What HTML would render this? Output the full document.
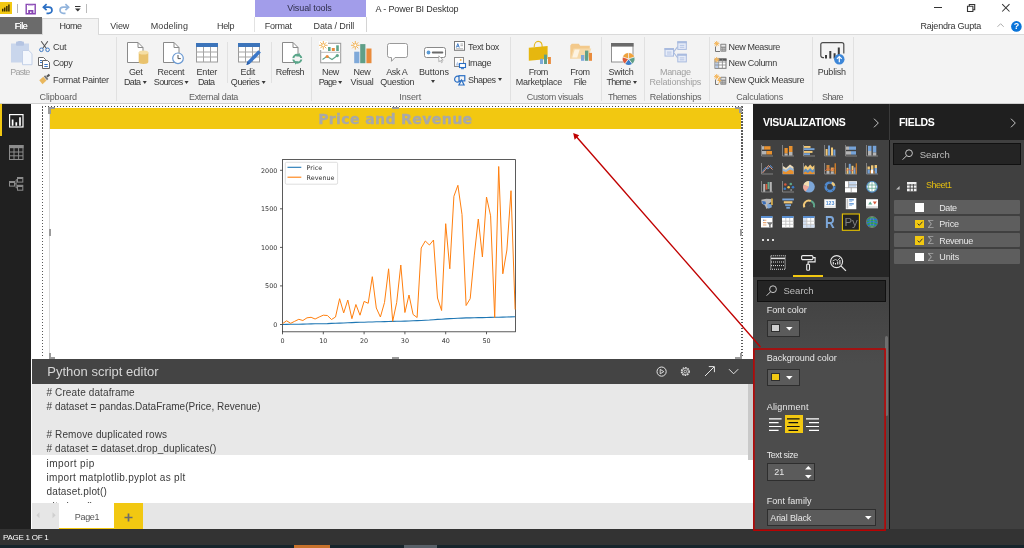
<!DOCTYPE html>
<html><head><meta charset="utf-8"><title>A - Power BI Desktop</title>
<style>
*{box-sizing:border-box;margin:0;padding:0}
html,body{width:1024px;height:548px;overflow:hidden;background:#fff}
body{font-family:"Liberation Sans",sans-serif;font-size:9px;color:#3a3a3a;position:relative;letter-spacing:-.15px}
#app{position:absolute;left:0;top:0;width:1024px;height:548px;will-change:transform}
.a{position:absolute}
.t{position:absolute;white-space:nowrap;height:12px;line-height:12px}
.c{text-align:center;transform:translateX(-50%)}
svg{position:absolute;overflow:visible}
.g{color:#5e5e5e}
.d{color:#a0a0a0}
.w{color:#e8e8e8}
.code{font-size:10px;color:#3a3a3a;left:46.5px;letter-spacing:-.1px}
.ph{font-size:10.5px;color:#fff;font-weight:bold;letter-spacing:-.3px}
.sep{position:absolute;width:1px;background:#e1e1e1}
.dd{position:absolute;background:#5b5b5b;border:1px solid #2e2e2e}
.row{position:absolute;left:894px;width:126px;height:14.3px;background:#5e5e5e;border-radius:1px}
</style></head><body>
<div id="app">
<!-- TITLE BAR -->
<div class="a" style="left:0px;top:2.3px;width:12px;height:11.7px;background:#f2c811;"></div>
<svg style="left:0px;top:2px" width="12" height="12" viewBox="0 0 12 12"><path d="M2.75 9.6v-2.8M4.75 9.600v-4M6.850 9.600v-5.500M8.900 9.600v-7.100" stroke="#2a2100" stroke-width="1.350" fill="none"/></svg>
<div class="a" style="left:17px;top:4px;width:1px;height:9px;background:#b5b5b5;"></div>
<svg style="left:25px;top:3px" width="12" height="12" viewBox="0 0 12 12"><path d="M1.200 1.400h9v9.400h-9z" fill="#fff" stroke="#8846b3" stroke-width="1.400"/><rect x="3.200" y="7" width="5.200" height="3.800" fill="#8846b3"/><rect x="5" y="8.600" width="1.500" height="1.300" fill="#fff"/><path d="M3 2.300h5.500" stroke="#c9a8e0" stroke-width="1"/></svg>
<svg style="left:42px;top:3px" width="12" height="11" viewBox="0 0 12 11"><path d="M1.5 4.2h5.2a3.3 3.1 0 0 1 0 6.2h-2.2" fill="none" stroke="#2b6fc4" stroke-width="1.700"/><path d="M4.6 1.2l-3.2 3l3.2 3" fill="none" stroke="#2b6fc4" stroke-width="1.700"/></svg>
<svg style="left:58px;top:3px" width="12" height="11" viewBox="0 0 12 11"><path d="M10.5 4.2h-5.2a3.3 3.1 0 0 0 0 6.2h2.2" fill="none" stroke="#92b4dc" stroke-width="1.700"/><path d="M7.4 1.2l3.2 3l-3.2 3" fill="none" stroke="#92b4dc" stroke-width="1.700"/></svg>
<svg style="left:75px;top:6px" width="6" height="7" viewBox="0 0 6 7"><path d="M0 0.5h5.5" stroke="#333" stroke-width="1"/><path d="M0 2.5h5.6l-2.8 3z" fill="#333"/></svg>
<div class="a" style="left:86px;top:4px;width:1px;height:9px;background:#bbb;"></div>
<div class="a" style="left:254.5px;top:0px;width:111.5px;height:17px;background:#a29dea;"></div>
<div class="t c" style="top:2.00px;left:309.5px;letter-spacing:-0.113px;color:#2e2e4a">Visual tools</div>
<div class="t" style="top:2.70px;left:375.5px;letter-spacing:-0.127px;color:#333">A - Power BI Desktop</div>
<div class="a" style="left:934px;top:7.4px;width:7.6px;height:1px;background:#333;"></div>
<svg style="left:967.3px;top:3.5px" width="9" height="9" viewBox="0 0 9 9"><path d="M0.500 2.300h5.400v5.200h-5.400z M2.300 2.100v-1.600h5.400v5.200h-1.600" fill="none" stroke="#333" stroke-width="1.100"/></svg>
<svg style="left:1002.2px;top:4px" width="8" height="8" viewBox="0 0 8 8"><path d="M0.200 0.200l7.300 7.300M7.500 0.200l-7.300 7.300" stroke="#333" stroke-width="1.050"/></svg>
<!-- TABS -->
<div class="a" style="left:0px;top:17.3px;width:42px;height:16.7px;background:#6b6b6b;"></div>
<div class="a" style="left:42px;top:17.5px;width:56.5px;height:17.5px;background:#f3f3f3;border:1px solid #d8d8d8;border-bottom:none"></div>
<div class="t c" style="top:20.00px;left:20.9px;letter-spacing:-0.500px;color:#fff;text-shadow:0 0 .4px #fff">File</div>
<div class="t c" style="top:20.00px;left:70.5px;letter-spacing:-0.564px;color:#333">Home</div>
<div class="t c" style="top:20.00px;left:119.75px;letter-spacing:-0.086px;">View</div>
<div class="t c" style="top:20.00px;left:169.4px;letter-spacing:0.091px;">Modeling</div>
<div class="t c" style="top:20.00px;left:225.6px;letter-spacing:-0.315px;">Help</div>
<div class="t c" style="top:20.00px;left:278.25px;letter-spacing:-0.250px;">Format</div>
<div class="t c" style="top:20.00px;left:333.9px;letter-spacing:-0.105px;">Data / Drill</div>
<div class="a" style="left:365.5px;top:17px;width:1px;height:15px;background:#d4d4d4;"></div>
<div class="a" style="left:254.3px;top:17px;width:1px;height:15px;background:#e2e2e2;"></div>
<div class="t c" style="top:20.00px;left:950.75px;letter-spacing:-0.217px;color:#333">Rajendra Gupta</div>
<svg style="left:996.5px;top:23.3px" width="8" height="5" viewBox="0 0 8 5"><path d="M0.500 3.800l3.100-3.100l3.100 3.100" fill="none" stroke="#ababab" stroke-width="1"/></svg>
<svg style="left:1011px;top:20.5px" width="11" height="11" viewBox="0 0 11 11"><circle cx="5.4" cy="5.4" r="5.3" fill="#0a74d9"/></svg>
<div class="t c" style="top:20.00px;left:1016.4px;color:#fff;font-weight:bold;font-size:9px">?</div>
<!-- RIBBON -->
<div class="a" style="left:0px;top:34px;width:1024px;height:70px;background:#f3f3f3;border-top:1px solid #dadada;border-bottom:1px solid #cfcfcf"></div>
<div class="a" style="left:43px;top:34px;width:54.5px;height:1px;background:#f3f3f3;"></div>
<div class="sep" style="left:116px;top:37px;height:64px"></div>
<div class="sep" style="left:311px;top:37px;height:64px"></div>
<div class="sep" style="left:510px;top:37px;height:64px"></div>
<div class="sep" style="left:601px;top:37px;height:64px"></div>
<div class="sep" style="left:643.5px;top:37px;height:64px"></div>
<div class="sep" style="left:708.5px;top:37px;height:64px"></div>
<div class="sep" style="left:812px;top:37px;height:64px"></div>
<div class="sep" style="left:853px;top:37px;height:64px"></div>
<div class="sep" style="left:226.5px;top:42px;height:41px"></div>
<div class="sep" style="left:271.2px;top:42px;height:41px"></div>
<svg style="left:11px;top:41px" width="22" height="24" viewBox="0 0 22 24"><rect x="0" y="2.5" width="18" height="19" fill="#c9d6ec"/><rect x="5" y="0.5" width="8" height="4.2" rx="1" fill="#b4c4e2"/><rect x="7.3" y="0" width="3.4" height="2" fill="#b4c4e2"/><path d="M11.5 9.5h6.3l3.2 3.2v11h-9.5z" fill="#f4f7fc" stroke="#c3d0e8" stroke-width="1"/></svg>
<div class="t c d" style="top:66.00px;left:19.9px;letter-spacing:-0.723px;">Paste</div>
<svg style="left:39px;top:41px" width="11" height="11" viewBox="0 0 11 11"><path d="M2.2 0.3l5.2 7.2M8.8 0.3l-5.2 7.2" stroke="#555" stroke-width="1.1" fill="none"/><circle cx="2.4" cy="8.8" r="1.8" fill="none" stroke="#3b78c4" stroke-width="1"/><circle cx="8.6" cy="8.8" r="1.8" fill="none" stroke="#3b78c4" stroke-width="1"/></svg>
<div class="t" style="top:40.50px;left:53px;letter-spacing:-0.268px;">Cut</div>
<svg style="left:38px;top:57px" width="12" height="12" viewBox="0 0 12 12"><path d="M0.5 0.5h5l2 2v6h-7z" fill="#fff" stroke="#666" stroke-width="1"/><path d="M4.5 3.5h5l2 2v6h-7z" fill="#fff" stroke="#666" stroke-width="1"/><path d="M2 3.5h2M2 5.5h2M6.3 7.5h3.5M6.3 9.5h3.5" stroke="#3b78c4" stroke-width="1"/></svg>
<div class="t" style="top:57.00px;left:53px;letter-spacing:-0.452px;">Copy</div>
<svg style="left:39px;top:74px" width="12" height="11" viewBox="0 0 12 11"><path d="M0.3 6.2l4-3.4l3.2 3.8l-4 3.6z" fill="#e9b75e"/><path d="M4.8 2.4l1.3-1.1l3.2 3.8l-1.3 1.1z" fill="#777"/><path d="M7.2 1.9l2.6-2.1l1.3 1.6l-2.6 2.1z" fill="#555"/></svg>
<div class="t" style="top:73.60px;left:53px;letter-spacing:-0.265px;">Format Painter</div>
<div class="t c g" style="top:90.60px;left:58.3px;letter-spacing:-0.124px;">Clipboard</div>
<svg style="left:127px;top:42px" width="22" height="23" viewBox="0 0 22 23"><path d="M0.5 0.5h10.5l5 5v15h-15.5z" fill="#fff" stroke="#8a8a8a" stroke-width="1"/><path d="M11 0.5v5h5" fill="none" stroke="#8a8a8a" stroke-width="1"/><path d="M11.7 10.5v9.5a4.8 2 0 0 0 9.6 0v-9.5z" fill="#e9c26d"/><ellipse cx="16.5" cy="10.5" rx="4.8" ry="2" fill="#f5dea4"/></svg>
<div class="t c" style="top:66.20px;left:135.6px;letter-spacing:-0.368px;">Get</div>
<div class="t c" style="top:75.90px;left:135.3px;"><span style="letter-spacing:-0.677px">Data</span><span style="display:inline-block;width:0;height:0;margin-left:2.200px;position:relative;top:-1.300px;border-left:2.800px solid transparent;border-right:2.800px solid transparent;border-top:3.100px solid #3a3a3a"></span></div>
<svg style="left:162.5px;top:42px" width="22" height="23" viewBox="0 0 22 23"><path d="M0.5 0.5h10.5l5 5v15h-15.5z" fill="#fff" stroke="#8a8a8a" stroke-width="1"/><path d="M11 0.5v5h5" fill="none" stroke="#8a8a8a" stroke-width="1"/><circle cx="15" cy="16.3" r="5.3" fill="#fff" stroke="#6b9ad3" stroke-width="1.2"/><path d="M15 13v3.6h2.8" fill="none" stroke="#555" stroke-width="1"/></svg>
<div class="t c" style="top:66.20px;left:170.9px;letter-spacing:-0.319px;">Recent</div>
<div class="t c" style="top:75.90px;left:171.3px;"><span style="letter-spacing:-0.616px">Sources</span><span style="display:inline-block;width:0;height:0;margin-left:2.200px;position:relative;top:-1.300px;border-left:2.800px solid transparent;border-right:2.800px solid transparent;border-top:3.100px solid #3a3a3a"></span></div>
<svg style="left:196px;top:42.5px" width="22" height="20" viewBox="0 0 22 20"><rect x="0.5" y="0.5" width="21" height="18.5" fill="#fff" stroke="#9a9a9a" stroke-width="1"/><rect x="0" y="0" width="22" height="4" fill="#3c74ba"/><path d="M0.5 9h21M0.5 14h21M7.5 4v15M14.5 4v15" stroke="#a5a5a5" stroke-width="1" fill="none"/></svg>
<div class="t c" style="top:66.20px;left:206.8px;letter-spacing:-0.202px;">Enter</div>
<div class="t c" style="top:75.90px;left:206.2px;letter-spacing:-0.677px;">Data</div>
<svg style="left:237.5px;top:42.5px" width="23" height="22" viewBox="0 0 23 22"><rect x="0.5" y="0.5" width="21" height="18.5" fill="#fff" stroke="#9a9a9a" stroke-width="1"/><rect x="0" y="0" width="22" height="4" fill="#3c74ba"/><path d="M0.5 9h21M0.5 14h21M7.5 4v15M14.5 4v15" stroke="#a5a5a5" stroke-width="1" fill="none"/><path d="M20.3 7.2l2.6 2.4l-11 11.2l-3.4 1.2l0.9-3.5z" fill="#3c78c8"/><path d="M8.5 21.9l0.9-3.4l2.5 2.3z" fill="#2b5ea8"/></svg>
<div class="t c" style="top:66.20px;left:247.7px;letter-spacing:-0.227px;">Edit</div>
<div class="t c" style="top:75.90px;left:248.2px;"><span style="letter-spacing:-0.430px">Queries</span><span style="display:inline-block;width:0;height:0;margin-left:2.200px;position:relative;top:-1.300px;border-left:2.800px solid transparent;border-right:2.800px solid transparent;border-top:3.100px solid #3a3a3a"></span></div>
<svg style="left:282px;top:41.5px" width="22" height="23" viewBox="0 0 22 23"><path d="M0.5 0.5h10.5l5 5v15h-15.5z" fill="#fff" stroke="#8a8a8a" stroke-width="1"/><path d="M11 0.5v5h5" fill="none" stroke="#8a8a8a" stroke-width="1"/><circle cx="15.3" cy="16.8" r="4" fill="#f3f3f3" stroke="#5aa68a" stroke-width="2"/><path d="M10 16.8h3.2M17.3 16.8h3.5" stroke="#f3f3f3" stroke-width="1.6"/><path d="M17.6 10.8v3.6h-3.6z" fill="#5aa68a"/><path d="M13 22.8v-3.6h3.6z" fill="#5aa68a"/></svg>
<div class="t c" style="top:66.20px;left:290px;letter-spacing:-0.459px;">Refresh</div>
<div class="t c g" style="top:90.60px;left:213.5px;letter-spacing:-0.302px;">External data</div>
<svg style="left:319px;top:40.5px" width="23" height="23" viewBox="0 0 23 23"><rect x="1.7" y="2.3" width="20" height="19.5" fill="#fff" stroke="#999" stroke-width="1"/><path d="M1.7 11.3h20" stroke="#bbb" stroke-width="1"/><rect x="9" y="6" width="2.6" height="4" fill="#5fa58a"/><rect x="12.8" y="7" width="3" height="3" fill="#e98b3c"/><rect x="17.2" y="4.3" width="2.6" height="5.7" fill="#5fa58a"/><path d="M3.5 18.5l4.5-3.2l5 3.2l5.5-4" fill="none" stroke="#5fa58a" stroke-width="1.1"/><circle cx="8.2" cy="15.5" r="1.6" fill="#e98b3c"/><circle cx="18.3" cy="14.6" r="1.6" fill="#5fa58a"/><rect x="0" y="0" width="9" height="9" fill="#fff"/><g stroke="#f3b55a" stroke-width="1" fill="none"><path d="M4.3 0v8.6M0 4.3h8.6M1.3 1.3l6 6M7.3 1.3l-6 6"/></g><circle cx="4.3" cy="4.3" r="1.6" fill="#fff" stroke="#f3b55a" stroke-width=".9"/></svg>
<div class="t c" style="top:66.20px;left:330.5px;letter-spacing:-0.401px;">New</div>
<div class="t c" style="top:75.90px;left:330.5px;"><span style="letter-spacing:-0.879px">Page</span><span style="display:inline-block;width:0;height:0;margin-left:2.200px;position:relative;top:-1.300px;border-left:2.800px solid transparent;border-right:2.800px solid transparent;border-top:3.100px solid #3a3a3a"></span></div>
<svg style="left:350.8px;top:40.5px" width="21" height="23" viewBox="0 0 21 23"><rect x="3.2" y="10.7" width="5.2" height="11.5" fill="#7fa9d9"/><rect x="9.2" y="3.1" width="5.2" height="19.1" fill="#5f9f88"/><rect x="15.4" y="7.5" width="5.1" height="14.7" fill="#e98b3c"/><g stroke="#f3b55a" stroke-width="1" fill="none"><path d="M4.3 0v8.6M0 4.3h8.6M1.3 1.3l6 6M7.3 1.3l-6 6"/></g><circle cx="4.3" cy="4.3" r="1.6" fill="#fff" stroke="#f3b55a" stroke-width=".9"/></svg>
<div class="t c" style="top:66.20px;left:362px;letter-spacing:-0.401px;">New</div>
<div class="t c" style="top:75.90px;left:362px;letter-spacing:-0.242px;">Visual</div>
<svg style="left:387px;top:43px" width="21" height="19" viewBox="0 0 21 19"><path d="M2.5 0.5h16a2 2 0 0 1 2 2v10a2 2 0 0 1 -2 2h-10.5l-3.5 3.8v-3.8h-2a2 2 0 0 1 -2-2v-10a2 2 0 0 1 2-2z" fill="#fff" stroke="#9a9a9a" stroke-width="1"/></svg>
<div class="t c" style="top:66.20px;left:396.8px;letter-spacing:-0.382px;">Ask A</div>
<div class="t c" style="top:75.90px;left:397.2px;letter-spacing:-0.265px;">Question</div>
<svg style="left:423.5px;top:47px" width="23" height="16" viewBox="0 0 23 16"><rect x="0.5" y="0.5" width="21" height="10" rx="2" fill="#fff" stroke="#8a8a8a" stroke-width="1"/><circle cx="4.5" cy="5.5" r="1.9" fill="#5b9bd5"/><rect x="7.8" y="4.4" width="11.5" height="2.2" rx="1" fill="#6a6a6a"/><path d="M14.8 8.8v6l1.5-1.3l1.2 2.2l0.9-0.5l-1.1-2.1h1.9z" fill="#fff" stroke="#999" stroke-width=".7"/></svg>
<div class="t c" style="top:66.20px;left:433.9px;letter-spacing:-0.074px;">Buttons</div>
<div class="a" style="left:431.100px;top:80px;width:0;height:0;border-left:2.800px solid transparent;border-right:2.800px solid transparent;border-top:3.100px solid #3a3a3a"></div>
<svg style="left:454px;top:41px" width="11" height="10" viewBox="0 0 11 10"><rect x="0.5" y="0.5" width="10" height="8.8" fill="#fff" stroke="#7a7a7a" stroke-width="1"/><path d="M2.3 6.6l1.5-4l1.5 4M2.9 5.3h1.8" fill="none" stroke="#3b78c4" stroke-width=".9"/><path d="M6.5 3h2.5M6.5 4.7h2.5M2 7.8h7" stroke="#999" stroke-width=".8"/></svg>
<div class="t" style="top:40.50px;left:468px;letter-spacing:-0.314px;">Text box</div>
<svg style="left:454px;top:57px" width="12" height="12" viewBox="0 0 12 12"><rect x="0.5" y="0.5" width="9" height="9" fill="#fff" stroke="#8a8a8a" stroke-width="1"/><path d="M1.5 8.5l2-4l2 4z" fill="#b8cbe8"/><circle cx="6.7" cy="3" r="1" fill="#f3b55a"/><rect x="5.5" y="6.5" width="6" height="4" fill="#fff" stroke="#2b6fc4" stroke-width="1.1"/><path d="M7 11.7h3" stroke="#2b6fc4" stroke-width="1"/></svg>
<div class="t" style="top:57.00px;left:468px;letter-spacing:-0.402px;">Image</div>
<svg style="left:454px;top:74.5px" width="12" height="11" viewBox="0 0 12 11"><circle cx="3.6" cy="4.2" r="3" fill="none" stroke="#2b6fc4" stroke-width="1.2"/><rect x="5" y="0.7" width="5.8" height="5.2" fill="#f3f3f3" stroke="#2b6fc4" stroke-width="1.2"/><path d="M7.5 5l-2.6 5h5.2z" fill="#f3f3f3" stroke="#2b6fc4" stroke-width="1.2"/></svg>
<div class="t" style="top:73.60px;left:468px;"><span style="letter-spacing:-0.504px">Shapes</span><span style="display:inline-block;width:0;height:0;margin-left:2.200px;position:relative;top:-1.300px;border-left:2.800px solid transparent;border-right:2.800px solid transparent;border-top:3.100px solid #3a3a3a"></span></div>
<div class="t c g" style="top:90.60px;left:410.2px;letter-spacing:-0.135px;">Insert</div>
<svg style="left:528px;top:40px" width="24" height="25" viewBox="0 0 24 25"><path d="M6.2 7c0-7.5 8-7.5 8 0" fill="none" stroke="#e7b81a" stroke-width="1.1"/><path d="M0.8 7.8l18.8-1.8v13l-18.8 1.8z" fill="#e6b70f"/><rect x="12" y="18.8" width="3" height="5.2" fill="#7fa9d9"/><rect x="16" y="14.6" width="3" height="9.4" fill="#5f9f88"/><rect x="20" y="17" width="2.9" height="7" fill="#e98b3c"/></svg>
<div class="t c" style="top:66.20px;left:538.3px;letter-spacing:-0.449px;">From</div>
<div class="t c" style="top:75.90px;left:538.9px;letter-spacing:-0.247px;">Marketplace</div>
<svg style="left:570px;top:43px" width="23" height="18" viewBox="0 0 23 18"><path d="M0.3 15.8v-13.3l1.5-1.8h7l1.4 2h9.6v3" fill="#f3c98b"/><path d="M0.3 15.8l3.2-10.3h17.8l-3.2 10.3z" fill="#f6d9a8"/><path d="M2.2 14.6l2.5-8h5l-2.5 8z" fill="#fdf3e1"/><rect x="11" y="12" width="3.3" height="5.8" fill="#7fa9d9"/><rect x="15" y="7.6" width="3.3" height="10.2" fill="#5f9f88"/><rect x="19" y="9.9" width="3" height="7.9" fill="#e98b3c"/></svg>
<div class="t c" style="top:66.20px;left:579.9px;letter-spacing:-0.449px;">From</div>
<div class="t c" style="top:75.90px;left:579.9px;letter-spacing:-0.500px;">File</div>
<div class="t c g" style="top:90.60px;left:555px;letter-spacing:-0.337px;">Custom visuals</div>
<svg style="left:610.5px;top:42.5px" width="25" height="23" viewBox="0 0 25 23"><rect x="0.5" y="0.5" width="21.5" height="18.5" fill="#fff" stroke="#8f8f8f" stroke-width="1"/><rect x="0" y="0" width="22.5" height="3.6" fill="#6a6a6a"/><circle cx="17.6" cy="15.9" r="6.3" fill="#f3f3f3"/><path d="M17.6 15.9v-5.9a5.9 5.9 0 0 1 5.6 4.1z" fill="#efa23c"/><path d="M17.6 15.9l5.6-1.8a5.9 5.9 0 0 1 -2.1 6.6z" fill="#5f9f88"/><path d="M17.6 15.9l3.5 4.8a5.9 5.9 0 0 1 -7 0z" fill="#3c7dc8"/><path d="M17.6 15.9l-3.5 4.8a5.9 5.9 0 0 1 -2.1-6.6z" fill="#dd5a3a"/><path d="M17.6 15.9l-5.6-1.8a5.9 5.9 0 0 1 5.6-4.1z" fill="#efa23c"/><path d="M17.6 15.9v-5.9M17.6 15.9l5.6-1.8M17.6 15.9l3.5 4.8M17.6 15.9l-3.5 4.8M17.6 15.9l-5.6-1.8" stroke="#f3f3f3" stroke-width=".8"/></svg>
<div class="t c" style="top:66.20px;left:621px;letter-spacing:-0.268px;">Switch</div>
<div class="t c" style="top:75.90px;left:621.5px;"><span style="letter-spacing:-0.842px">Theme</span><span style="display:inline-block;width:0;height:0;margin-left:2.200px;position:relative;top:-1.300px;border-left:2.800px solid transparent;border-right:2.800px solid transparent;border-top:3.100px solid #3a3a3a"></span></div>
<div class="t c g" style="top:90.60px;left:622px;letter-spacing:-0.735px;">Themes</div>
<svg style="left:664px;top:41px" width="24" height="22" viewBox="0 0 24 22"><path d="M9.5 11.2l4.2-5.5M9.5 11.2l4.2 5.8" stroke="#a9bbdf" stroke-width="1.1"/><rect x="1" y="7.5" width="8.5" height="7.6" fill="#e6ecf8" stroke="#a9bbdf" stroke-width="1"/><rect x="0.5" y="7.0" width="9.5" height="2" fill="#a9bbdf"/><path d="M3 11.1h4.5M3 13.0h4.5" stroke="#a9bbdf" stroke-width=".8"/><rect x="13.8" y="0.8" width="8.5" height="7.6" fill="#e6ecf8" stroke="#a9bbdf" stroke-width="1"/><rect x="13.3" y="0.30000000000000004" width="9.5" height="2" fill="#a9bbdf"/><path d="M15.8 4.4h4.5M15.8 6.3h4.5" stroke="#a9bbdf" stroke-width=".8"/><rect x="13.8" y="13.3" width="8.5" height="7.6" fill="#e6ecf8" stroke="#a9bbdf" stroke-width="1"/><rect x="13.3" y="12.8" width="9.5" height="2" fill="#a9bbdf"/><path d="M15.8 16.900000000000002h4.5M15.8 18.8h4.5" stroke="#a9bbdf" stroke-width=".8"/></svg>
<div class="t c d" style="top:66.20px;left:675.3px;letter-spacing:-0.320px;">Manage</div>
<div class="t c d" style="top:75.90px;left:675.3px;letter-spacing:-0.194px;">Relationships</div>
<div class="t c g" style="top:90.60px;left:675.5px;letter-spacing:-0.194px;">Relationships</div>
<svg style="left:714px;top:41px" width="13" height="12" viewBox="0 0 13 12"><path d="M1.5 5.5v5h4.5" fill="none" stroke="#777" stroke-width="1"/><rect x="6.3" y="2.8" width="6" height="8" rx=".8" fill="#8a8a8a"/><rect x="7.3" y="3.8" width="4" height="1.8" fill="#e8e8e8"/><path d="M7.3 7.3h4M7.3 9.1h4" stroke="#ddd" stroke-width=".9" stroke-dasharray="1 .5"/><g stroke="#f3b55a" stroke-width="1"><path d="M2.7 0v5.4M0 2.7h5.4M.8 .8l3.8 3.8M4.6 .8l-3.8 3.8"/></g></svg>
<div class="t" style="top:40.50px;left:728.6px;letter-spacing:-0.374px;">New Measure</div>
<svg style="left:714px;top:57px" width="13" height="12" viewBox="0 0 13 12"><rect x="1" y="2" width="11" height="9.3" fill="#fff" stroke="#777" stroke-width="1"/><rect x="4.5" y="1.5" width="8" height="2.3" fill="#555"/><rect x="1.5" y="5" width="3" height="6" fill="#b8cbe8"/><path d="M1 5h11M1 8h11M4.7 2v9M8.4 2v9" stroke="#888" stroke-width=".8"/><g stroke="#f3b55a" stroke-width="1"><path d="M2.7 0v5.4M0 2.7h5.4M.8 .8l3.8 3.8M4.6 .8l-3.8 3.8"/></g></svg>
<div class="t" style="top:57.00px;left:728.6px;letter-spacing:-0.312px;">New Column</div>
<svg style="left:714px;top:73.5px" width="13" height="12" viewBox="0 0 13 12"><path d="M1.5 5.5v5h3" fill="none" stroke="#777" stroke-width="1"/><rect x="6.3" y="2.8" width="6" height="8" rx=".8" fill="#8a8a8a"/><rect x="7.3" y="3.8" width="4" height="1.8" fill="#e8e8e8"/><path d="M7.3 7.3h4M7.3 9.1h4" stroke="#ddd" stroke-width=".9" stroke-dasharray="1 .5"/><path d="M5.5 3l-2.3 4h2l-1.5 4l3.8-5h-2l1.5-3z" fill="#f3b55a"/><g stroke="#f3b55a" stroke-width="1"><path d="M2.7 0v5.4M0 2.7h5.4M.8 .8l3.8 3.8M4.6 .8l-3.8 3.8"/></g></svg>
<div class="t" style="top:73.60px;left:728.6px;letter-spacing:-0.325px;">New Quick Measure</div>
<div class="t c g" style="top:90.60px;left:759.6px;letter-spacing:-0.185px;">Calculations</div>
<svg style="left:819.5px;top:42px" width="26" height="23" viewBox="0 0 26 23"><path d="M4 15.6h-1.2a2 2 0 0 1 -2-2v-11a2 2 0 0 1 2-2h19a2 2 0 0 1 2 2v9" fill="none" stroke="#4a4a4a" stroke-width="1.2"/><path d="M6 16.5v-3.5M10.3 16.5v-7.5M14.6 16.5v-5.3M18.8 16.5v-11" stroke="#3c3c3c" stroke-width="2"/><circle cx="19.3" cy="17.2" r="5.2" fill="#3c86d8"/><path d="M19.3 20.3v-5.6M16.9 16.9l2.4-2.4l2.4 2.4" fill="none" stroke="#fff" stroke-width="1.2"/></svg>
<div class="t c" style="top:66.20px;left:831.8px;letter-spacing:-0.202px;">Publish</div>
<div class="t c g" style="top:90.60px;left:832.5px;letter-spacing:-0.603px;">Share</div>
<!-- LEFT NAV -->
<div class="a" style="left:0px;top:104px;width:31.2px;height:425px;background:#202020;"></div>
<div class="a" style="left:0px;top:104px;width:2px;height:31.5px;background:#f2c811;"></div>
<svg style="left:9px;top:114px" width="15" height="14" viewBox="0 0 15 14"><rect x="0.6" y="0.6" width="13.4" height="12.4" fill="none" stroke="#fff" stroke-width="1.2"/><path d="M3.6 11.8v-6.3M7.3 11.8v-3.6M11 11.8v-8.6" stroke="#fff" stroke-width="1.7"/></svg>
<svg style="left:9px;top:145px" width="15" height="15" viewBox="0 0 15 15"><rect x="0.5" y="0.5" width="13.5" height="14" fill="none" stroke="#8c8c8c" stroke-width="1"/><rect x="0" y="0" width="14.5" height="3.2" fill="#8c8c8c"/><path d="M0.5 7h13.5M0.5 10.8h13.5M5 3v11.5M9.6 3v11.5" stroke="#8c8c8c" stroke-width="1"/></svg>
<svg style="left:9px;top:177px" width="15" height="14" viewBox="0 0 15 14"><g fill="none" stroke="#8c8c8c" stroke-width="1"><rect x="0.5" y="4.5" width="5" height="4.6"/><rect x="8.5" y="0.5" width="5.3" height="4.6"/><rect x="8.5" y="8.3" width="5.3" height="4.9"/><path d="M5.5 6.8h1.6M7.1 2.8v8M7.1 2.8h1.4M7.1 10.8h1.4"/><path d="M0.5 5.3h5M8.5 1.3h5.3M8.5 9.1h5.3" stroke-width="1.6"/></g></svg>
<!-- CANVAS -->
<div class="a" style="left:31.5px;top:104px;width:721.5px;height:254.5px;background:#fff;"></div>
<div class="a" style="left:42px;top:105.800px;width:701px;height:1.400px;background:repeating-linear-gradient(90deg,#474747 0,#474747 1.500px,transparent 1.500px,transparent 3px)"></div>
<div class="a" style="left:49px;top:107px;width:693px;height:251.5px;background:#fff;border-left:1px solid #dcdcdc"></div>
<div class="a" style="left:49.5px;top:107.5px;width:691.5px;height:21.3px;background:#f2c811;"></div>
<div class="t c" style="top:113.00px;left:395.3px;font-family:'DejaVu Sans','Liberation Sans',sans-serif;font-size:14.2px;font-weight:bold;color:#a8a8a8;-webkit-text-stroke:.3px #a8a8a8;letter-spacing:.3px;height:18px;line-height:18px;top:110px">Price and Revenue</div>
<div class="a" style="left:42.200px;top:105.800px;width:1.300px;height:252.600px;background:repeating-linear-gradient(180deg,#5a5a5a 0,#5a5a5a 1.500px,transparent 1.500px,transparent 3px)"></div>
<div class="a" style="left:741.400px;top:105.800px;width:1.300px;height:252.600px;background:repeating-linear-gradient(180deg,#5a5a5a 0,#5a5a5a 1.500px,transparent 1.500px,transparent 3px)"></div>
<div class="a" style="left:48.2px;top:107px;width:2.6px;height:6.9px;background:#9b9b9b;"></div>
<div class="a" style="left:48.2px;top:107px;width:6.8px;height:1.7px;background:#9b9b9b;"></div>
<div class="a" style="left:739px;top:107px;width:2.5px;height:6px;background:#9b9b9b;"></div>
<div class="a" style="left:735px;top:107px;width:6.5px;height:1.6px;background:#9b9b9b;"></div>
<div class="a" style="left:391.5px;top:107px;width:7px;height:1.6px;background:#9b9b9b;"></div>
<div class="a" style="left:48.5px;top:228.5px;width:2.5px;height:7.5px;background:#9b9b9b;"></div>
<div class="a" style="left:739.8px;top:228.5px;width:2.5px;height:7.5px;background:#9b9b9b;"></div>
<div class="a" style="left:48.5px;top:352.5px;width:2.5px;height:6px;background:#9b9b9b;"></div>
<div class="a" style="left:739.8px;top:353px;width:2.5px;height:5.5px;background:#9b9b9b;"></div>
<div class="a" style="left:48.5px;top:357px;width:6.5px;height:1.5px;background:#9b9b9b;"></div>
<div class="a" style="left:391.5px;top:357px;width:7px;height:1.5px;background:#9b9b9b;"></div>
<div class="a" style="left:735px;top:357px;width:6.5px;height:1.5px;background:#9b9b9b;"></div>
<!-- CHART -->
<svg style="left:0;top:0" width="1024" height="548" viewBox="0 0 1024 548"><rect x="282.5" y="159.6" width="233" height="172.2" fill="#fff" stroke="#333" stroke-width=".8"/><polyline points="282.5,324.5 286.6,324.4 290.7,324.3 294.7,324.3 298.8,324.2 302.9,324.1 307.0,324.0 311.1,323.9 315.1,323.8 319.2,323.7 323.3,323.7 327.4,323.6 331.5,323.4 335.5,323.3 339.6,323.1 343.7,323.0 347.8,322.8 351.9,322.6 355.9,322.4 360.0,322.3 364.1,322.2 368.2,322.0 372.3,322.0 376.3,321.8 380.4,321.7 384.5,321.6 388.6,321.5 392.7,321.4 396.7,321.3 400.8,321.2 404.9,321.1 409.0,321.0 413.1,320.8 417.1,320.6 421.2,320.5 425.3,320.2 429.4,320.0 433.5,319.7 437.5,319.4 441.6,319.2 445.7,318.9 449.8,318.6 453.9,318.5 457.9,318.3 462.0,318.1 466.1,317.9 470.2,317.9 474.3,317.7 478.3,317.6 482.4,317.6 486.5,317.5 490.6,317.4 494.7,317.3 498.7,317.3 502.8,317.1 506.9,317.0 511.0,316.9 515.1,316.8" fill="none" stroke="#1f77b4" stroke-width="1.1" stroke-linejoin="round"/><polyline points="282.5,323.7 286.6,320.8 290.7,323.3 294.7,321.3 298.8,319.3 302.9,320.5 307.0,317.8 311.1,317.3 315.1,319.0 319.2,317.0 323.3,315.2 327.4,315.5 331.5,319.5 335.5,317.0 339.6,298.7 343.7,312.9 347.8,300.0 351.9,318.7 355.9,304.5 360.0,315.2 364.1,301.4 368.2,303.3 372.3,276.7 376.3,308.0 380.4,317.0 384.5,302.5 388.6,268.8 392.7,321.3 396.7,302.5 400.8,265.0 404.9,312.5 409.0,295.0 413.1,314.5 417.1,317.5 421.2,248.0 425.3,241.0 429.4,245.0 433.5,240.0 437.5,298.0 441.6,310.5 445.7,223.7 449.8,268.8 453.9,196.3 457.9,185.3 462.0,214.5 466.1,305.5 470.2,298.7 474.3,255.1 478.3,219.0 482.4,257.0 486.5,197.0 490.6,215.8 494.7,317.5 498.7,166.5 502.8,273.8 506.9,250.0 511.0,190.7 515.1,309.5" fill="none" stroke="#ff7f0e" stroke-width="1" stroke-linejoin="round"/><g font-family="'DejaVu Sans',sans-serif" font-size="6.4" fill="#333" letter-spacing="0"><path d="M280 324.5h2.5" stroke="#333" stroke-width=".8"/><text x="277.3" y="326.9" text-anchor="end">0</text><path d="M280 285.9h2.5" stroke="#333" stroke-width=".8"/><text x="277.3" y="288.3" text-anchor="end">500</text><path d="M280 247.4h2.5" stroke="#333" stroke-width=".8"/><text x="277.3" y="249.8" text-anchor="end">1000</text><path d="M280 208.8h2.5" stroke="#333" stroke-width=".8"/><text x="277.3" y="211.2" text-anchor="end">1500</text><path d="M280 170.3h2.5" stroke="#333" stroke-width=".8"/><text x="277.3" y="172.7" text-anchor="end">2000</text><path d="M282.5 331.8v2.5" stroke="#333" stroke-width=".8"/><text x="282.5" y="342.6" text-anchor="middle">0</text><path d="M323.3 331.8v2.5" stroke="#333" stroke-width=".8"/><text x="323.3" y="342.6" text-anchor="middle">10</text><path d="M364.1 331.8v2.5" stroke="#333" stroke-width=".8"/><text x="364.1" y="342.6" text-anchor="middle">20</text><path d="M404.9 331.8v2.5" stroke="#333" stroke-width=".8"/><text x="404.9" y="342.6" text-anchor="middle">30</text><path d="M445.7 331.8v2.5" stroke="#333" stroke-width=".8"/><text x="445.7" y="342.6" text-anchor="middle">40</text><path d="M486.5 331.8v2.5" stroke="#333" stroke-width=".8"/><text x="486.5" y="342.6" text-anchor="middle">50</text><rect x="285.3" y="162.3" width="52.3" height="21.9" rx="1.3" fill="#fff" fill-opacity=".8" stroke="#d6d6d6" stroke-width=".8"/><path d="M287.5 167.3h13.8" stroke="#1f77b4" stroke-width="1.1"/><path d="M287.5 177.2h13.8" stroke="#ff7f0e" stroke-width="1.1"/><text x="306.6" y="169.7">Price</text><text x="306.6" y="179.6">Revenue</text></g></svg>
<!-- SCRIPT EDITOR -->
<div class="a" style="left:31.5px;top:358.5px;width:721.5px;height:25.5px;background:#444;"></div>
<div class="t" style="top:365.00px;left:47.3px;font-size:13px;color:#d6d6d6;letter-spacing:0;height:18px;line-height:18px;top:362.5px">Python script editor</div>
<svg style="left:655px;top:364.5px" width="14" height="14" viewBox="0 0 14 14"><circle cx="6.6" cy="6.6" r="4.6" fill="none" stroke="#e6e6e6" stroke-width="1"/><path d="M5.2 4.4v4.4l3.6-2.2z" fill="none" stroke="#e6e6e6" stroke-width=".9"/></svg>
<svg style="left:679px;top:364.5px" width="14" height="14" viewBox="0 0 14 14"><circle cx="6.3" cy="6.5" r="4" fill="none" stroke="#e6e6e6" stroke-width="1.1" stroke-dasharray="1.6 1"/><circle cx="6.3" cy="6.5" r="3.1" fill="none" stroke="#e6e6e6" stroke-width=".8"/><circle cx="6.3" cy="6.5" r="1.3" fill="none" stroke="#e6e6e6" stroke-width=".8"/></svg>
<svg style="left:704px;top:364.5px" width="12" height="12" viewBox="0 0 12 12"><path d="M1 11l9-9M4.8 1.6h5.6v5.6" fill="none" stroke="#e6e6e6" stroke-width="1"/></svg>
<svg style="left:728px;top:367.5px" width="12" height="8" viewBox="0 0 12 8"><path d="M1 1.2l4.6 4.6l4.6-4.6" fill="none" stroke="#e6e6e6" stroke-width="1"/></svg>
<div class="a" style="left:31.5px;top:384px;width:716px;height:70.8px;background:#e8e8e8;"></div>
<div class="a" style="left:747.5px;top:384px;width:5.5px;height:75.5px;background:#c9c9c9;"></div>
<div class="t code" style="top:385.70px;left:46.5px;letter-spacing:0.119px;height:13px;line-height:13px;font-size:10px;"># Create dataframe</div>
<div class="t code" style="top:399.90px;left:46.5px;letter-spacing:0.019px;height:13px;line-height:13px;font-size:10px;"># dataset = pandas.DataFrame(Price, Revenue)</div>
<div class="t code" style="top:427.80px;left:46.5px;letter-spacing:0.115px;height:13px;line-height:13px;font-size:10px;"># Remove duplicated rows</div>
<div class="t code" style="top:442.10px;left:46.5px;letter-spacing:0.125px;height:13px;line-height:13px;font-size:10px;"># dataset = dataset.drop_duplicates()</div>
<div class="t code" style="top:457.10px;left:46.5px;letter-spacing:0.430px;height:13px;line-height:13px;font-size:10px;">import pip</div>
<div class="t code" style="top:471.30px;left:46.5px;letter-spacing:0.307px;height:13px;line-height:13px;font-size:10px;">import matplotlib.pyplot as plt</div>
<div class="t code" style="top:485.00px;left:46.5px;letter-spacing:0.153px;height:13px;line-height:13px;font-size:10px;">dataset.plot()</div>
<div class="a" style="left:46.5px;top:501.5px;width:120px;height:1.4px;overflow:hidden"><div class="t code" style="left:0;top:-0.900px;letter-spacing:.35px">plt.show()</div></div>
<!-- PAGE TABS -->
<div class="a" style="left:31.5px;top:503px;width:721.5px;height:26px;background:#e6e6e6;"></div>
<div class="a" style="left:58.5px;top:503px;width:55.5px;height:26px;background:#fff;border-bottom:1.2px solid #f2c811"></div>
<div class="a" style="left:114px;top:503px;width:29.3px;height:26px;background:#f2c811;"></div>
<div class="t c" style="top:511.00px;left:87px;letter-spacing:-0.345px;color:#555">Page1</div>
<svg style="left:124px;top:513px" width="9" height="9" viewBox="0 0 9 9"><path d="M4.5 0.5v8M0.5 4.5h8" stroke="#6b6b6b" stroke-width="1.7"/></svg>
<svg style="left:36px;top:512px" width="4" height="7" viewBox="0 0 4 7"><path d="M3.5 0.3v6l-3.2-3z" fill="#cfcfcf"/></svg>
<svg style="left:51.5px;top:512px" width="4" height="7" viewBox="0 0 4 7"><path d="M0.5 0.3v6l3.2-3z" fill="#cfcfcf"/></svg>
<!-- STATUS -->
<div class="a" style="left:0px;top:529px;width:1024px;height:16.2px;background:#333;"></div>
<div class="t" style="top:531.50px;left:3px;color:#fff;font-size:8px;letter-spacing:-.25px">PAGE 1 OF 1</div>
<div class="a" style="left:0px;top:545.2px;width:1024px;height:2.8px;background:#17252c;"></div>
<div class="a" style="left:294px;top:545.2px;width:36.2px;height:2.8px;background:#c8722c;"></div>
<div class="a" style="left:404px;top:545.2px;width:33.2px;height:2.8px;background:#586068;"></div>
<!-- VISUALIZATIONS PANE -->
<div class="a" style="left:753px;top:104px;width:137px;height:425px;background:#4a4a4a;background:linear-gradient(#414141 0,#414141 180px,#4c4c4c 260px)"></div>
<div class="a" style="left:753px;top:104px;width:137px;height:35.7px;background:#1f1f1f;"></div>
<div class="t ph" style="top:116.20px;left:763px;">VISUALIZATIONS</div>
<svg style="left:873px;top:117.5px" width="7" height="10" viewBox="0 0 7 10"><path d="M1 0.7l4.3 4.3l-4.3 4.3" fill="none" stroke="#c8c8c8" stroke-width="1"/></svg>
<svg style="left:761.0px;top:145.0px" width="12" height="12" viewBox="0 0 12 12"><path d="M0.5 0v11h11.5" fill="none" stroke="#8a8a8a" stroke-width=".9"/><rect x="1" y="1.2" width="2.2" height="3.4" fill="#b5b5b5"/><rect x="3.2" y="1.2" width="6.3" height="3.4" fill="#e8912f"/><rect x="1" y="6" width="4.5" height="3.5" fill="#b5b5b5"/><rect x="5.5" y="6" width="5.5" height="3.5" fill="#e8912f"/></svg>
<svg style="left:782.0px;top:145.0px" width="12" height="12" viewBox="0 0 12 12"><path d="M0.5 0v11h11.5" fill="none" stroke="#8a8a8a" stroke-width=".9"/><rect x="2.5" y="3" width="3.2" height="5.5" fill="#e8912f"/><rect x="2.5" y="8.5" width="3.2" height="2" fill="#b5b5b5"/><rect x="7" y="1" width="3.5" height="6" fill="#e8912f"/><rect x="7" y="7" width="3.5" height="3.5" fill="#b5b5b5"/></svg>
<svg style="left:803.1px;top:145.0px" width="12" height="12" viewBox="0 0 12 12"><path d="M0.5 0v11h11.5" fill="none" stroke="#8a8a8a" stroke-width=".9"/><rect x="1" y="1" width="6.5" height="1.9" fill="#f0c878"/><rect x="1" y="3.2" width="10.5" height="1.9" fill="#76a3d8"/><rect x="1" y="6" width="8.5" height="1.9" fill="#f0c878"/><rect x="1" y="8.2" width="6" height="1.9" fill="#76a3d8"/></svg>
<svg style="left:824.1px;top:145.0px" width="12" height="12" viewBox="0 0 12 12"><path d="M0.5 0v11h11.5" fill="none" stroke="#8a8a8a" stroke-width=".9"/><rect x="1.6" y="4" width="2" height="6.5" fill="#f0c878"/><rect x="4" y="0.5" width="2" height="10" fill="#76a3d8"/><rect x="7" y="2.5" width="2" height="8" fill="#f0c878"/><rect x="9.4" y="4.5" width="2" height="6" fill="#76a3d8"/></svg>
<svg style="left:845.2px;top:145.0px" width="12" height="12" viewBox="0 0 12 12"><path d="M0.5 0v11h11.5" fill="none" stroke="#8a8a8a" stroke-width=".9"/><rect x="1" y="1.5" width="3" height="3.3" fill="#b5b5b5"/><rect x="4" y="1.5" width="7" height="3.3" fill="#76a3d8"/><rect x="1" y="6.2" width="5" height="3.4" fill="#b5b5b5"/><rect x="6" y="6.2" width="5" height="3.4" fill="#76a3d8"/></svg>
<svg style="left:866.2px;top:145.0px" width="12" height="12" viewBox="0 0 12 12"><path d="M0.5 0v11h11.5" fill="none" stroke="#8a8a8a" stroke-width=".9"/><rect x="2" y="0.8" width="3.5" height="5.2" fill="#76a3d8"/><rect x="2" y="6" width="3.5" height="4.5" fill="#b5b5b5"/><rect x="6.8" y="0.8" width="3.5" height="6.7" fill="#76a3d8"/><rect x="6.8" y="7.5" width="3.5" height="3" fill="#b5b5b5"/></svg>
<svg style="left:761.0px;top:162.8px" width="12" height="12" viewBox="0 0 12 12"><path d="M0.5 0v11h11.5" fill="none" stroke="#8a8a8a" stroke-width=".9"/><path d="M1.5 8.5l3-4l2.5 1.5l2.5-3.5l2 2.5" fill="none" stroke="#5b8fd0" stroke-width="1"/><path d="M1.5 10l3-3.5l3-4l2 2l2 2" fill="none" stroke="#e2a08a" stroke-width="1"/></svg>
<svg style="left:782.0px;top:162.8px" width="12" height="12" viewBox="0 0 12 12"><path d="M0.5 0v11h11.5" fill="none" stroke="#8a8a8a" stroke-width=".9"/><path d="M1 3l3 2l4-3.5l3.5 2.5v7h-10.5z" fill="#ead9b8"/><path d="M1 5.5l3 1.5l4-3l3.5 2v5h-10.5z" fill="#8fb4dc"/><path d="M1 8l3 1l4-2.5l3.5 1.5v3h-10.5z" fill="#e8912f"/></svg>
<svg style="left:803.1px;top:162.8px" width="12" height="12" viewBox="0 0 12 12"><path d="M0.5 0v11h11.5" fill="none" stroke="#8a8a8a" stroke-width=".9"/><path d="M1 4l1.8-2l2 2.3l2.4-2.8l2.2 2.5l2-2v9h-10.4z" fill="#f0c878"/><path d="M1 7l1.8-1.5l2 2l2.4-2.5l2.2 2.2l2-1.7v5.5h-10.4z" fill="#5b8fc4"/><path d="M1 9.5l1.8-1l2 1.5l2.4-2l2.2 1.7l2-1.2v2.5h-10.4z" fill="#e8912f"/></svg>
<svg style="left:824.1px;top:162.8px" width="12" height="12" viewBox="0 0 12 12"><path d="M0.5 0v11h11.5" fill="none" stroke="#8a8a8a" stroke-width=".9"/><rect x="2.5" y="2" width="3" height="6" fill="#c8843c"/><rect x="2.5" y="8" width="3" height="2.8" fill="#b5b5b5"/><rect x="6.8" y="4.5" width="3" height="4" fill="#e8a050"/><rect x="6.8" y="8.5" width="3" height="2.3" fill="#b5b5b5"/><rect x="10.5" y="0.3" width="1.5" height="10.5" fill="#c87a28"/><path d="M1 8l3-3l3 2.5l3.5-2" fill="none" stroke="#d86848" stroke-width=".8"/></svg>
<svg style="left:845.2px;top:162.8px" width="12" height="12" viewBox="0 0 12 12"><path d="M0.5 0v11h11.5" fill="none" stroke="#8a8a8a" stroke-width=".9"/><rect x="1.6" y="4.8" width="1.9" height="6" fill="#f0c878"/><rect x="3.8" y="0.8" width="1.9" height="10" fill="#76a3d8"/><rect x="6.6" y="2.8" width="1.9" height="8" fill="#f0c878"/><rect x="8.8" y="4.5" width="1.7" height="6.3" fill="#76a3d8"/><rect x="10.7" y="0.3" width="1.3" height="10.5" fill="#c87a28"/><path d="M1 7.5l3-1l3 1.5l3.5-3" fill="none" stroke="#d86848" stroke-width=".8"/></svg>
<svg style="left:866.2px;top:162.8px" width="12" height="12" viewBox="0 0 12 12"><path d="M0.5 0v11h11.5" fill="none" stroke="#8a8a8a" stroke-width=".9"/><rect x="1.5" y="3.5" width="2.4" height="3" fill="#f0c878"/><rect x="1.5" y="6.5" width="2.4" height="4" fill="#76a3d8"/><rect x="5" y="2.3" width="2.4" height="4" fill="#f0c878"/><rect x="5" y="6.3" width="2.4" height="4.2" fill="#fff"/><rect x="8.6" y="2" width="2.4" height="3" fill="#f0c878"/><rect x="8.6" y="5" width="2.4" height="5.5" fill="#76a3d8"/><path d="M3.9 8l1.1-1.5v4h-1.1zM7.4 7l1.2 1.5v2h-1.2z" fill="#c8843c"/></svg>
<svg style="left:761.0px;top:180.6px" width="12" height="12" viewBox="0 0 12 12"><path d="M0.5 0v11h11.5" fill="none" stroke="#8a8a8a" stroke-width=".9"/><rect x="2.2" y="3" width="2" height="7.8" fill="#b5b5b5"/><rect x="4.6" y="3" width="1.8" height="5.5" fill="#d8583a"/><rect x="6.6" y="1" width="1.8" height="7" fill="#5fa58a"/><rect x="8.8" y="1" width="2" height="9.8" fill="#b5b5b5"/></svg>
<svg style="left:782.0px;top:180.6px" width="12" height="12" viewBox="0 0 12 12"><path d="M0.5 0v11h11.5" fill="none" stroke="#8a8a8a" stroke-width=".9"/><circle cx="3.3" cy="3.5" r="1.3" fill="#d8583a"/><circle cx="8.8" cy="3" r="1.3" fill="#5fa58a"/><circle cx="6.6" cy="6.3" r="1.3" fill="#f0c050"/><circle cx="2.8" cy="7.8" r="1.3" fill="#3c7dc8"/><circle cx="11" cy="6.2" r="1.3" fill="#3c7dc8"/><circle cx="9.2" cy="9" r="1" fill="#888"/></svg>
<svg style="left:803.1px;top:180.6px" width="12" height="12" viewBox="0 0 12 12"><circle cx="6" cy="5.8" r="5.8" fill="#7da7d9"/><path d="M6 5.8v-5.8a5.8 5.8 0 0 0 -5.5 3.8z" fill="#f3dcae"/><path d="M6 5.8l-5.5-2a5.8 5.8 0 0 0 2.2 6.8z" fill="#efa99a"/></svg>
<svg style="left:824.1px;top:180.6px" width="12" height="12" viewBox="0 0 12 12"><circle cx="6" cy="5.8" r="4.3" fill="none" stroke="#4f8ad0" stroke-width="2.6"/><path d="M7.8 1.9a4.3 4.3 0 0 1 2.4 3" fill="none" stroke="#f0c878" stroke-width="2.6"/><path d="M6 1.5v-1.5M10.2 5.3l1.6-.3M8.5 9.3l1 1.3M3.5 9.3l-1 1.3M1.8 5l-1.6-.4" stroke="#434343" stroke-width=".8"/></svg>
<svg style="left:845.2px;top:180.6px" width="12" height="12" viewBox="0 0 12 12"><rect x="0" y="0.2" width="12" height="11.2" fill="#fff"/><rect x="3.8" y="0.8" width="7.6" height="2.8" fill="#c5d8f0"/><rect x="3.8" y="4" width="7.6" height="2.3" fill="#c5d8f0"/><path d="M3.6 0.2v6.5M0 6.7h12M6.2 6.7v4.7M3.6 3.8h8.4" stroke="#8a8a8a" stroke-width=".7"/></svg>
<svg style="left:866.2px;top:180.6px" width="12" height="12" viewBox="0 0 12 12"><circle cx="6" cy="5.8" r="5.3" fill="#fff" stroke="#4f8ad0" stroke-width="1.1"/><path d="M1 4h10M0.8 7.3h10.4M6 0.6v10.4M3.5 1.2c-1.3 3-1.3 6.2 0 9.2M8.5 1.2c1.3 3 1.3 6.2 0 9.2" fill="none" stroke="#5fa58a" stroke-width=".7"/></svg>
<svg style="left:761.0px;top:198.4px" width="12" height="12" viewBox="0 0 12 12"><path d="M0.3 1.8l5-1l4.7 0.2l0.4 2.8l-3.4 2.5l1.5 2.6l-3 2l-1.5-3.5l-3.2-1.8z" fill="#b8b8b8"/><path d="M1 3l3.5 0.5l0.5 2.5l-2.8 0.8z" fill="#3c6fb8"/><path d="M6.5 5.8l4 .5l0.3 3l-3.3 1.4l-1.4-2.4z" fill="#7da7d9"/><path d="M10.2 0.5h1.5v6.5h-1.5z" fill="#f0c050"/></svg>
<svg style="left:782.0px;top:198.4px" width="12" height="12" viewBox="0 0 12 12"><rect x="0.3" y="0.5" width="11.6" height="1.9" fill="#76a3d8"/><rect x="1.8" y="3.2" width="8.6" height="2.2" fill="#f0c878"/><rect x="3.2" y="6.2" width="5.8" height="1.9" fill="#76a3d8"/><rect x="4.3" y="8.8" width="3.6" height="1.9" fill="#76a3d8"/></svg>
<svg style="left:803.1px;top:198.4px" width="12" height="12" viewBox="0 0 12 12"><path d="M1.3 9.3a4.9 4.9 0 0 1 6.6-6.3" fill="none" stroke="#f0c878" stroke-width="2"/><path d="M7.9 3a4.9 4.9 0 0 1 3 6.3" fill="none" stroke="#5fa58a" stroke-width="2"/><path d="M6 8.5l2-2.3" stroke="#555" stroke-width=".9"/></svg>
<svg style="left:824.1px;top:198.4px" width="12" height="12" viewBox="0 0 12 12"><rect x="0.2" y="1.2" width="11.6" height="8.8" fill="#e9e9e9"/><rect x="1.2" y="2.2" width="9.6" height="5.6" fill="#fff"/><text x="6" y="7.2" text-anchor="middle" font-size="5.2" font-weight="bold" fill="#4f8ad0" letter-spacing="0">123</text></svg>
<svg style="left:845.2px;top:198.4px" width="12" height="12" viewBox="0 0 12 12"><rect x="0.8" y="0" width="10.5" height="11.2" fill="#fff"/><rect x="1.6" y="0.8" width="1.6" height="9.6" fill="#c4c4c4"/><rect x="4.2" y="1.2" width="4.6" height="1.3" fill="#4f8ad0"/><rect x="4.2" y="3.2" width="3" height="0.8" fill="#9bbce4"/><rect x="4.2" y="5.2" width="4.6" height="1.3" fill="#4f8ad0"/><rect x="4.2" y="7.2" width="3" height="0.8" fill="#9bbce4"/></svg>
<svg style="left:866.2px;top:198.4px" width="12" height="12" viewBox="0 0 12 12"><rect x="0" y="1.2" width="12" height="9" fill="#fff"/><rect x="0" y="8.2" width="12" height="2" fill="#dcdcdc"/><path d="M2.2 6.6l2-3l2 3z" fill="#5fa58a"/><path d="M6.8 3.6h4l-2 3z" fill="#d8583a"/></svg>
<svg style="left:761.0px;top:216.2px" width="12" height="12" viewBox="0 0 12 12"><rect x="0" y="0.5" width="11.5" height="11" fill="#fff"/><rect x="0" y="0" width="11.5" height="2" fill="#5b8fd0"/><path d="M2 4.3h3.4M2 6.6h3.4M2 9h3.4" stroke="#e8a878" stroke-width="1.1"/><path d="M2 4.3h1.2" stroke="#5b8fd0" stroke-width="1.1"/><path d="M5.8 6.3h6.2l-2.3 2.8v3.2l-1.6-1v-2.2z" fill="#7a7a7a"/></svg>
<svg style="left:782.0px;top:216.2px" width="12" height="12" viewBox="0 0 12 12"><rect x="0" y="0.3" width="11.5" height="11.3" fill="#fff"/><rect x="0" y="0" width="11.5" height="2" fill="#5b8fd0"/><path d="M0 5.2h11.5M0 8.3h11.5M3.8 2v9.6M7.7 2v9.6" stroke="#bdbdbd" stroke-width=".8"/></svg>
<svg style="left:803.1px;top:216.2px" width="12" height="12" viewBox="0 0 12 12"><rect x="0" y="0.3" width="11.5" height="11.3" fill="#fff"/><rect x="0" y="0" width="11.5" height="2" fill="#5b8fd0"/><rect x="0" y="2" width="3.5" height="9.6" fill="#d2e0f3"/><rect x="0" y="8.6" width="11.5" height="3" fill="#d2e0f3"/><path d="M0 5.2h11.5M0 8.3h11.5M3.8 2v9.6M7.7 2v9.6" stroke="#bdbdbd" stroke-width=".8"/></svg>
<svg style="left:824.1px;top:216.2px" width="12" height="12" viewBox="0 0 12 12"><text x="7.300" y="12" text-anchor="middle" font-size="16.500" font-weight="bold" fill="#7da7d9" letter-spacing="0" transform="scale(.82,1)">R</text></svg>
<svg style="left:845.2px;top:216.2px" width="12" height="12" viewBox="0 0 12 12"><rect x="-2.6" y="-2" width="17" height="16.3" fill="#242424" stroke="#e6c200" stroke-width="1.1"/><text x="6" y="10" text-anchor="middle" font-size="11.5" fill="#808080" letter-spacing="-.3">Py</text></svg>
<svg style="left:866.2px;top:216.2px" width="12" height="12" viewBox="0 0 12 12"><circle cx="6" cy="6" r="5.6" fill="#2e9e4f" stroke="#777" stroke-width=".8"/><path d="M1.5 4.5c3-2 6-2 9.5-0.5M0.8 7.2c3.5-2 7-2 10.5-.3M2 9.8c3-1.6 5.5-1.6 8 -.2" fill="none" stroke="#2b6fd8" stroke-width="1.4"/><path d="M6 0.5c-2.5 3-2.5 8 0 11M6 .5c2.500 3 2.500 8 0 11" fill="none" stroke="#999" stroke-width=".5"/></svg>
<div class="a" style="left:762px;top:239px;width:2px;height:2px;background:#dcdcdc;"></div>
<div class="a" style="left:767.2px;top:239px;width:2px;height:2px;background:#dcdcdc;"></div>
<div class="a" style="left:772.2px;top:239px;width:2px;height:2px;background:#dcdcdc;"></div>
<div class="a" style="left:753px;top:250.3px;width:137px;height:27px;background:#262626;"></div>
<svg style="left:770px;top:255px" width="16" height="15" viewBox="0 0 16 15"><rect x="0.8" y="0.8" width="14.4" height="13.4" fill="none" stroke="#e0e0e0" stroke-width="1.1" stroke-dasharray="1 1"/><path d="M1 3.4h14" stroke="#e0e0e0" stroke-width="1.5"/><path d="M1 7h14M1 10.6h14" stroke="#e0e0e0" stroke-width="1" stroke-dasharray="1 1"/></svg>
<svg style="left:800.5px;top:255px" width="15" height="16" viewBox="0 0 15 16"><rect x="0.6" y="0.6" width="11.3" height="4" rx="1.2" fill="none" stroke="#eee" stroke-width="1.1"/><path d="M11.9 2.6h2.2v4.3h-7v2.5" fill="none" stroke="#eee" stroke-width="1.1"/><rect x="5.7" y="9.3" width="2.8" height="6" rx=".7" fill="none" stroke="#eee" stroke-width="1.1"/></svg>
<svg style="left:830px;top:254.5px" width="17" height="17" viewBox="0 0 17 17"><circle cx="6.6" cy="6.6" r="6" fill="none" stroke="#e6e6e6" stroke-width="1.1"/><path d="M10.9 10.9l5 5" stroke="#e6e6e6" stroke-width="1.3"/><path d="M3.3 9.5v-2.5M5.5 9.5v-1.5M7.7 9.5v-3M9.9 9.5v-4.5" stroke="#e6e6e6" stroke-width="1.1"/><path d="M2.5 6l3 -1.5l2 1l3-3" fill="none" stroke="#e6e6e6" stroke-width=".8"/></svg>
<div class="a" style="left:793.2px;top:274.9px;width:30px;height:2.1px;background:#f2c811;"></div>
<div class="a" style="left:757px;top:279.7px;width:129px;height:22px;background:#242424;border:1px solid #111"></div>
<svg style="left:765.5px;top:285.2px" width="12" height="11" viewBox="0 0 12 11"><circle cx="7" cy="4.2" r="3.4" fill="none" stroke="#c8c8c8" stroke-width="1"/><path d="M4.6 6.7l-4 4" stroke="#c8c8c8" stroke-width="1"/></svg>
<div class="t" style="top:285.00px;left:783.5px;color:#bdbdbd;font-size:9.5px;letter-spacing:0">Search</div>
<div class="a" style="left:884.6px;top:335.5px;width:3.6px;height:80.5px;background:#6e6e6e;border-radius:2px"></div>
<div class="t w" style="top:303.50px;left:766.7px;letter-spacing:-0.001px;">Font color</div>
<div class="dd" style="left:766.5px;top:319.5px;width:33px;height:17.3px"></div>
<div class="a" style="left:770.8px;top:323.7px;width:9px;height:8.6px;background:#cfcfcf;border:1px solid #2e2e2e"></div>
<svg style="left:785.5px;top:326.5px" width="7" height="4" viewBox="0 0 7 4"><path d="M0 0h6.6l-3.3 3.6z" fill="#fff"/></svg>
<div class="t w" style="top:352.30px;left:766.7px;letter-spacing:-0.002px;">Background color</div>
<div class="dd" style="left:766.5px;top:368.5px;width:33px;height:17.3px"></div>
<div class="a" style="left:770.8px;top:372.7px;width:9px;height:8.6px;background:#f2c811;border:1px solid #2e2e2e"></div>
<svg style="left:785.5px;top:375.5px" width="7" height="4" viewBox="0 0 7 4"><path d="M0 0h6.6l-3.3 3.6z" fill="#fff"/></svg>
<div class="t w" style="top:400.90px;left:766.7px;letter-spacing:0.209px;">Alignment</div>
<svg style="left:768.8px;top:418px" width="13" height="13" viewBox="0 0 13 13"><path d="M0 .9h12.6M0 4.6h9.6M0 8.5h12.6M0 12.4h9.6" stroke="#fff" stroke-width="1.2"/></svg>
<div class="a" style="left:784.7px;top:415px;width:18.2px;height:17.8px;background:#f2c811;"></div>
<svg style="left:787.2px;top:418px" width="13" height="13" viewBox="0 0 13 13"><path d="M0 .9h12.6M1.5 4.6h9.6M0 8.5h12.6M1.5 12.4h9.6" stroke="#111" stroke-width="1.2"/></svg>
<svg style="left:805.7px;top:418px" width="13" height="13" viewBox="0 0 13 13"><path d="M0 .9h13M3 4.6h10M0 8.5h13M3 12.4h10" stroke="#fff" stroke-width="1.2"/></svg>
<div class="t w" style="top:448.50px;left:766.7px;letter-spacing:-0.423px;">Text size</div>
<div class="dd" style="left:766.5px;top:463.2px;width:48.3px;height:17.6px"></div>
<div class="t w" style="top:466.00px;left:774.3px;letter-spacing:0">21</div>
<svg style="left:805px;top:465.8px" width="7" height="4" viewBox="0 0 7 4"><path d="M0 3.6h6.6l-3.3-3.6z" fill="#fff"/></svg>
<svg style="left:805px;top:474.6px" width="7" height="4" viewBox="0 0 7 4"><path d="M0 0h6.6l-3.3 3.6z" fill="#fff"/></svg>
<div class="t w" style="top:494.80px;left:766.7px;letter-spacing:0.090px;">Font family</div>
<div class="dd" style="left:766.5px;top:509.4px;width:109px;height:16.8px"></div>
<div class="t w" style="top:511.60px;left:770.3px;letter-spacing:-0.147px;">Arial Black</div>
<svg style="left:865.2px;top:515.8px" width="7" height="4" viewBox="0 0 7 4"><path d="M0 0h6.6l-3.3 3.6z" fill="#fff"/></svg>
<!-- FIELDS PANE -->
<div class="a" style="left:889px;top:104px;width:135px;height:425px;background:#404040;border-left:1.2px solid #141414"></div>
<div class="a" style="left:889px;top:104px;width:135px;height:35.7px;background:#1f1f1f;border-left:1.2px solid #3a3a3a"></div>
<div class="t ph" style="top:116.20px;left:899px;">FIELDS</div>
<svg style="left:1009.5px;top:117.5px" width="7" height="10" viewBox="0 0 7 10"><path d="M1 0.7l4.3 4.3l-4.3 4.3" fill="none" stroke="#c8c8c8" stroke-width="1"/></svg>
<div class="a" style="left:893.2px;top:143.4px;width:128.3px;height:21.8px;background:#242424;border:1px solid #111"></div>
<svg style="left:901.7px;top:148.9px" width="12" height="11" viewBox="0 0 12 11"><circle cx="7" cy="4.2" r="3.4" fill="none" stroke="#c8c8c8" stroke-width="1"/><path d="M4.6 6.7l-4 4" stroke="#c8c8c8" stroke-width="1"/></svg>
<div class="t" style="top:148.60px;left:919.7px;color:#bdbdbd;font-size:9.5px;letter-spacing:0">Search</div>
<svg style="left:895.5px;top:186px" width="4" height="4" viewBox="0 0 4 4"><path d="M3.6 0v3.6h-3.6z" fill="#bdbdbd"/></svg>
<svg style="left:907px;top:182px" width="10" height="10" viewBox="0 0 10 10"><rect x="0" y="0" width="9.5" height="9.3" fill="#f0f0f0"/><path d="M0 3h9.500M0 6.200h9.500M3.200 2v7.300M6.400 2v7.300" stroke="#3f3f3f" stroke-width=".9"/></svg>
<div class="t" style="top:179.00px;left:926px;letter-spacing:-0.504px;color:#e3bd10">Sheet1</div>
<div class="row" style="top:199.7px"></div>
<div class="a" style="left:915.2px;top:203.3px;width:8.4px;height:8.4px;background:#fff;"></div>
<div class="t w" style="top:201.50px;left:939.3px;letter-spacing:-0.452px;">Date</div>
<div class="row" style="top:216.3px"></div>
<div class="a" style="left:915.2px;top:219.87px;width:8.4px;height:8.4px;background:#f2c811;"></div>
<svg style="left:916.5px;top:221.47px" width="6" height="5" viewBox="0 0 6 5"><path d="M0.6 2.6l1.7 1.7l3.200-3.600" fill="none" stroke="#333" stroke-width="1"/></svg>
<div class="t" style="top:217.77px;left:927.6px;color:#a6a6a6;font-size:10.5px;letter-spacing:0">&Sigma;</div>
<div class="t w" style="top:218.07px;left:939.3px;letter-spacing:-0.221px;">Price</div>
<div class="row" style="top:232.8px"></div>
<div class="a" style="left:915.2px;top:236.44px;width:8.4px;height:8.4px;background:#f2c811;"></div>
<svg style="left:916.5px;top:238.04px" width="6" height="5" viewBox="0 0 6 5"><path d="M0.6 2.6l1.7 1.7l3.200-3.600" fill="none" stroke="#333" stroke-width="1"/></svg>
<div class="t" style="top:234.34px;left:927.6px;color:#a6a6a6;font-size:10.5px;letter-spacing:0">&Sigma;</div>
<div class="t w" style="top:234.64px;left:939.3px;letter-spacing:-0.361px;">Revenue</div>
<div class="row" style="top:249.4px"></div>
<div class="a" style="left:915.2px;top:253.01px;width:8.4px;height:8.4px;background:#fff;"></div>
<div class="t" style="top:250.91px;left:927.6px;color:#a6a6a6;font-size:10.5px;letter-spacing:0">&Sigma;</div>
<div class="t w" style="top:251.21px;left:939.3px;letter-spacing:-0.161px;">Units</div>
<!-- ANNOTATION -->
<svg style="left:0;top:0" width="1024" height="548" viewBox="0 0 1024 548"><rect x="753.9" y="349" width="131.200" height="181.200" fill="none" stroke="#c00000" stroke-width="1.500"/><path d="M760.500 347L576 136.300" stroke="#c00000" stroke-width="1.350"/><path d="M573.200 133.100l1.400 6.600l4.600-4.400z" fill="#c00000"/></svg>
</div>
</body></html>
